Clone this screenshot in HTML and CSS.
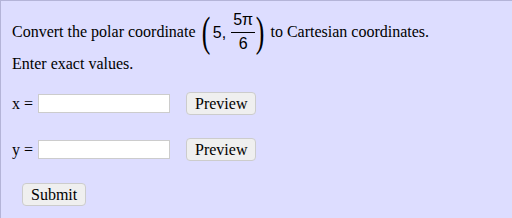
FILE: index.html
```html
<!DOCTYPE html>
<html lang="en">

<head>
    <meta charset="UTF-8">
    <title>Polar to Cartesian</title>
    <link rel="stylesheet" href="styles.css">
</head>

<body>
    <div class="problem">
        <p class="question">
            Convert the polar coordinate
            <span class="math">
                <span class="paren">(</span>
                <span class="num">5,</span>
                <span class="frac">
                    <span class="top">5&pi;</span>
                    <span class="bottom">6</span>
                </span>
                <span class="paren">)</span>
            </span>
            to Cartesian coordinates.
        </p>
        <p class="hint">Enter exact values.</p>
        <div class="answer-row">
            <label for="ans-x">x =</label>
            <input id="ans-x" type="text">
            <button class="preview">Preview</button>
        </div>
        <div class="answer-row">
            <label for="ans-y">y =</label>
            <input id="ans-y" type="text">
            <button class="preview">Preview</button>
        </div>
        <div class="submit-row">
            <button class="submit">Submit</button>
        </div>
    </div>
</body>

</html>
```

FILE: styles.css
```css
body {
    margin: 0;
    background-color: #ddddff;
    font-family: "Liberation Serif", "Times New Roman", serif;
    font-size: 16px;
    color: #000;
}

.problem {
    height: 217px;
    border-top: 1px solid #b4b4d8;
    border-left: 1px solid #b4b4d8;
    padding: 0 11px;
}

.question {
    margin: 12px 0 0 0;
    display: flex;
    align-items: center;
    gap: 4px;
    white-space: nowrap;
}

.math {
    display: inline-flex;
    align-items: center;
    margin: 0 1px;
}

.paren {
    font-size: 43px;
    line-height: 38px;
    transform: scaleX(0.6);
    margin: 0 -2px;
}

.num {
    font-family: "Liberation Sans", Arial, sans-serif;
    font-size: 16px;
    margin: 2px 5px 0 2px;
}

.frac {
    display: inline-flex;
    flex-direction: column;
    align-items: center;
    font-family: "Liberation Sans", Arial, sans-serif;
    font-size: 16px;
    line-height: 14px;
}

.frac .top {
    border-bottom: 1px solid #000;
    padding: 0 2px 5px 2px;
}

.frac .bottom {
    padding-top: 4px;
}

.hint {
    margin: 4px 0 0 0;
}

.answer-row {
    display: flex;
    align-items: center;
    margin-top: 19px;
}

.answer-row + .answer-row {
    margin-top: 23px;
}

.answer-row label {
    width: 26px;
}

.answer-row input {
    width: 128px;
    height: 17px;
    border: 1px solid #cccccc;
    padding: 0 1px;
    margin: 0 16px 0 0;
    background-color: #fff;
}

button {
    font-family: "Liberation Serif", "Times New Roman", serif;
    font-size: 16px;
    background-color: #efefef;
    border: 1px solid #cccccc;
    border-radius: 4px;
    height: 23px;
    padding: 0 8px;
    color: #000;
}

.submit-row {
    margin: 22px 0 0 10px;
}
```
